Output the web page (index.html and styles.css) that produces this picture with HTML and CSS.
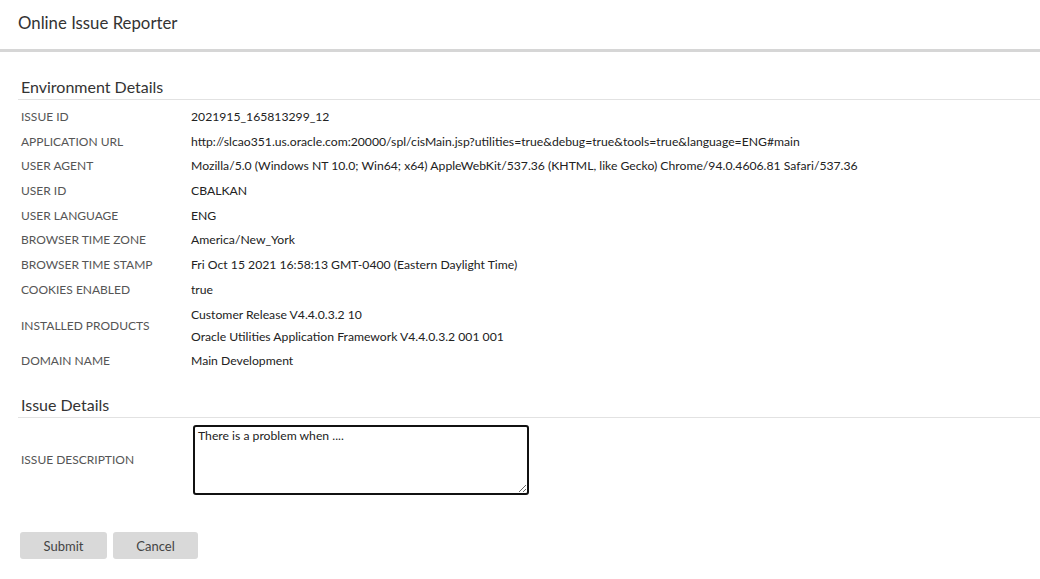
FILE: index.html
```html
<!DOCTYPE html>
<html lang="en">
<head>
<meta charset="utf-8">
<title>Online Issue Reporter</title>
<link rel="stylesheet" href="styles.css">
</head>
<body>
<header class="page-header">
  <h1 class="page-title">Online Issue Reporter</h1>
</header>
<main class="content">
  <section class="section">
    <h2 class="section-title">Environment Details</h2>
    <div class="details">
      <div class="label">ISSUE ID</div>
      <div class="value">2021915_165813299_12</div>
      <div class="label">APPLICATION URL</div>
      <div class="value">http://slcao351.us.oracle.com:20000/spl/cisMain.jsp?utilities=true&amp;debug=true&amp;tools=true&amp;language=ENG#main</div>
      <div class="label">USER AGENT</div>
      <div class="value">Mozilla/5.0 (Windows NT 10.0; Win64; x64) AppleWebKit/537.36 (KHTML, like Gecko) Chrome/94.0.4606.81 Safari/537.36</div>
      <div class="label">USER ID</div>
      <div class="value">CBALKAN</div>
      <div class="label">USER LANGUAGE</div>
      <div class="value">ENG</div>
      <div class="label">BROWSER TIME ZONE</div>
      <div class="value">America/New_York</div>
      <div class="label">BROWSER TIME STAMP</div>
      <div class="value">Fri Oct 15 2021 16:58:13 GMT-0400 (Eastern Daylight Time)</div>
      <div class="label">COOKIES ENABLED</div>
      <div class="value">true</div>
      <div class="label">INSTALLED PRODUCTS</div>
      <div class="value">
        <div>Customer Release V4.4.0.3.2 10</div>
        <div>Oracle Utilities Application Framework V4.4.0.3.2 001 001</div>
      </div>
      <div class="label">DOMAIN NAME</div>
      <div class="value">Main Development</div>
    </div>
  </section>
  <section class="section section-issue">
    <h2 class="section-title">Issue Details</h2>
    <div class="issue-row">
      <label class="label" for="desc">ISSUE DESCRIPTION</label>
      <textarea id="desc" class="desc">There is a problem when ....</textarea>
    </div>
  </section>
  <div class="actions">
    <button class="btn btn-submit" type="button">Submit</button>
    <button class="btn btn-cancel" type="button">Cancel</button>
  </div>
</main>
</body>
</html>
```
FILE: styles.css
```css
html, body {
  margin: 0;
  padding: 0;
  background: #ffffff;
}
body {
  font-family: Lato, "Noto Sans", "Liberation Sans", sans-serif;
  color: #222;
  width: 1040px;
  height: 579px;
  overflow: hidden;
}
.page-header {
  height: 49px;
  display: flex;
  align-items: center;
  padding-left: 18px;
  border-bottom: 3px solid #d6d6d6;
}
.page-title {
  margin: 0;
  font-size: 16.8px;
  font-weight: 400;
  color: #333;
  margin-top: -4px;
}
.content {
  padding-left: 18px;
}
.section {
  margin-top: 23px;
}
.section-issue {
  margin-top: 21px;
}
.section-title {
  margin: 0;
  padding-left: 3px;
  font-size: 16px;
  font-weight: 400;
  color: #333;
  line-height: 24px;
  border-bottom: 1px solid #e2e2e2;
}
.details {
  display: grid;
  grid-template-columns: 170px 1fr;
  row-gap: 2.7px;
  margin-top: 6px;
  padding-left: 3px;
}
.label {
  font-size: 12px;
  color: #555;
  line-height: 22px;
  align-self: center;
}
.value {
  font-size: 12.2px;
  color: #222;
  line-height: 22px;
}
.issue-row {
  display: grid;
  grid-template-columns: 172px 1fr;
  align-items: center;
  padding-left: 3px;
  margin-top: 7px;
}
.desc {
  width: 336px;
  height: 70px;
  box-sizing: border-box;
  border: 2px solid #111;
  border-radius: 3px;
  padding: 1px 3px;
  font-family: Lato, "Noto Sans", "Liberation Sans", sans-serif;
  font-size: 12.2px;
  color: #222;
  line-height: 16px;
  margin: 0;
  display: block;
}
.actions {
  display: flex;
  gap: 6px;
  margin-top: 37px;
  padding-left: 2px;
}
.btn {
  height: 27px;
  border: none;
  border-radius: 3px;
  background: #d9d9d9;
  color: #444;
  font-family: Lato, "Noto Sans", "Liberation Sans", sans-serif;
  font-size: 13px;
  padding: 0;
}
.btn-submit {
  width: 87px;
}
.btn-cancel {
  width: 85px;
}
```
